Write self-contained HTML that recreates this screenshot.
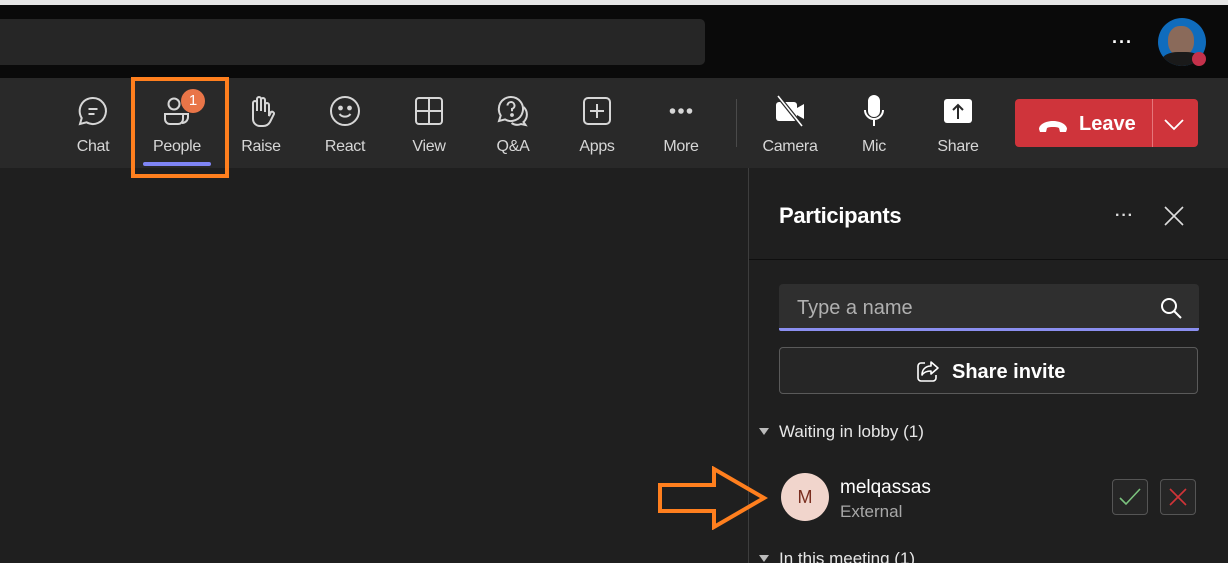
<!DOCTYPE html>
<html><head><meta charset="utf-8"><style>
*{margin:0;padding:0;box-sizing:border-box}
html,body{width:1228px;height:563px;overflow:hidden}
body{background:#1f1f1f;font-family:"Segoe UI","Liberation Sans",sans-serif;color:#fff;position:relative}
.abs{position:absolute}
.item{position:absolute;top:94px;width:84px;text-align:center}
.item svg{display:block;margin:0 auto;width:34px;height:34px}
.item .lbl{font-size:16px;color:#d6d6d6;margin-top:10px;letter-spacing:-0.3px}
</style></head><body>
<div class="abs" style="left:0;top:0;width:1228px;height:5px;background:#e6e6e6"></div>
<div class="abs" style="left:0;top:5px;width:1228px;height:73px;background:#0a0a0a"></div>
<div class="abs" style="left:0;top:19px;width:705px;height:46px;background:#262626;border-radius:0 5px 5px 0"></div>
<div class="abs" style="left:1112px;top:32px;font-size:18px;letter-spacing:1px;color:#fff;font-weight:bold">···</div>
<div class="abs" style="left:1158px;top:18px;width:48px;height:48px;border-radius:50%;background:#0f6cbd;overflow:hidden">
 <div class="abs" style="left:10px;top:8px;width:26px;height:30px;border-radius:45%;background:#8a6a5a"></div>
 <div class="abs" style="left:4px;top:34px;width:40px;height:20px;border-radius:40%;background:#1a1a1a"></div>
</div>
<div class="abs" style="left:1192px;top:52px;width:14px;height:14px;border-radius:50%;background:#c4314b"></div>

<div class="abs" style="left:0;top:78px;width:1228px;height:90px;background:#292929"></div>

<div class="item" style="left:51px"><svg viewBox="0 0 34 34" fill="none" stroke="#d6d6d6" stroke-width="2"><path d="M17 4a13 13 0 1 1-6.5 24.3L4 30l1.7-6A13 13 0 0 1 17 4z"/><path d="M12.5 15h9M12.5 20h6"/></svg><div class="lbl">Chat</div></div>
<div class="item" style="left:135px"><svg viewBox="0 0 34 34" fill="none" stroke="#d6d6d6" stroke-width="2"><circle cx="14" cy="10" r="5.5"/><path d="M5 20h18v5a5 5 0 0 1-5 5h-8a5 5 0 0 1-5-5z"/><path d="M23 20h5v3a6 6 0 0 1-6 6"/></svg><div class="lbl">People</div></div>
<div class="abs" style="left:181px;top:89px;width:24px;height:24px;border-radius:50%;background:#e97548;font-size:15px;text-align:center;line-height:24px;color:#fff">1</div>
<div class="abs" style="left:143px;top:162px;width:68px;height:4px;border-radius:2px;background:#7f85f5"></div>
<div class="abs" style="left:131px;top:77px;width:98px;height:101px;border:4px solid #ff7f1e"></div>

<div class="item" style="left:219px"><svg viewBox="0 0 34 34" fill="none" stroke="#d6d6d6" stroke-width="2"><path d="M9 19V9a2 2 0 0 1 4 0v8V5a2 2 0 0 1 4 0v12V6a2 2 0 0 1 4 0v12-7a2 2 0 0 1 4 0v11l2-4a2 2 0 0 1 3 2l-4 8a8 8 0 0 1-7 4h-3a7 7 0 0 1-7-7z"/></svg><div class="lbl">Raise</div></div>
<div class="item" style="left:303px"><svg viewBox="0 0 34 34" fill="none" stroke="#d6d6d6" stroke-width="2"><circle cx="17" cy="17" r="14"/><circle cx="12.5" cy="14" r="1.4" fill="#d6d6d6"/><circle cx="21.5" cy="14" r="1.4" fill="#d6d6d6"/><path d="M11.5 20a7 7 0 0 0 11 0"/></svg><div class="lbl">React</div></div>
<div class="item" style="left:387px"><svg viewBox="0 0 34 34" fill="none" stroke="#d6d6d6" stroke-width="2"><rect x="4" y="4" width="26" height="26" rx="3"/><path d="M17 4v26M4 17h26"/></svg><div class="lbl">View</div></div>
<div class="item" style="left:471px"><svg viewBox="0 0 34 34" fill="none" stroke="#d6d6d6" stroke-width="2"><path d="M15 3a12 12 0 1 1-6 22.4L3 27l1.7-5.5A12 12 0 0 1 15 3z"/><path d="M27.5 13a10 10 0 0 1 0 15l2 3-4.5-1a10 10 0 0 1-9.5-1"/><path d="M11.5 11.5a3.5 3.5 0 1 1 4.5 3.4v2.4"/><circle cx="16" cy="21" r=".9" fill="#d6d6d6"/></svg><div class="lbl">Q&amp;A</div></div>
<div class="item" style="left:555px"><svg viewBox="0 0 34 34" fill="none" stroke="#d6d6d6" stroke-width="2"><rect x="4" y="4" width="26" height="26" rx="4"/><path d="M17 10v14M10 17h14"/></svg><div class="lbl">Apps</div></div>
<div class="item" style="left:639px"><svg viewBox="0 0 34 34" fill="#d6d6d6"><circle cx="8.5" cy="17" r="2.8"/><circle cx="17" cy="17" r="2.8"/><circle cx="25.5" cy="17" r="2.8"/></svg><div class="lbl">More</div></div>
<div class="abs" style="left:736px;top:99px;width:1px;height:48px;background:#4a4a4a"></div>
<div class="item" style="left:748px"><svg viewBox="0 0 34 34"><rect x="3" y="8" width="21" height="19" rx="3" fill="#fff"/><path d="M24 14l7-4v15l-7-4z" fill="#fff"/><path d="M5 2l24 30" stroke="#292929" stroke-width="4"/><path d="M5 2l24 30" stroke="#fff" stroke-width="1.6"/></svg><div class="lbl">Camera</div></div>
<div class="item" style="left:832px"><svg viewBox="0 0 34 34" fill="none" stroke="#fff" stroke-width="2"><rect x="12" y="2" width="10" height="20" rx="5" fill="#fff"/><path d="M8 16a9 9 0 0 0 18 0M17 25v7"/></svg><div class="lbl">Mic</div></div>
<div class="item" style="left:916px"><svg viewBox="0 0 34 34"><rect x="3" y="5" width="28" height="24" rx="3" fill="#fff"/><path d="M17 25V11M12 16l5-5 5 5" stroke="#292929" stroke-width="2" fill="none"/></svg><div class="lbl">Share</div></div>

<div class="abs" style="left:1015px;top:99px;width:183px;height:48px;background:#cf343b;border-radius:4px"></div>
<div class="abs" style="left:1152px;top:99px;width:1px;height:48px;background:#e5767b"></div>
<svg class="abs" style="left:1037px;top:116px" width="32" height="20" viewBox="0 0 32 20"><path d="M2 13c0-4 6-8 14-8s14 4 14 8l-1 3h-6l-1-4c-2-1-4-1-6-1s-4 0-6 1l-1 4H3z" fill="#fff"/></svg>
<div class="abs" style="left:1079px;top:113px;font-size:20px;font-weight:bold;color:#fff">Leave</div>
<svg class="abs" style="left:1163px;top:116px" width="22" height="16" viewBox="0 0 22 16"><path d="M2 4l9 9 9-9" stroke="#fff" stroke-width="1.8" fill="none"/></svg>

<div class="abs" style="left:748px;top:168px;width:1px;height:395px;background:#3d3d3d"></div>
<div class="abs" style="left:779px;top:203px;font-size:22px;font-weight:bold;color:#fff;letter-spacing:-0.3px">Participants</div>
<div class="abs" style="left:1115px;top:207px;font-size:16px;font-weight:bold;letter-spacing:1px;color:#ddd">···</div>
<svg class="abs" style="left:1163px;top:205px" width="22" height="22" viewBox="0 0 22 22"><path d="M2 2l18 18M20 2L2 20" stroke="#ddd" stroke-width="1.6"/></svg>
<div class="abs" style="left:749px;top:259px;width:479px;height:1px;background:#0f0f0f"></div>

<div class="abs" style="left:779px;top:284px;width:420px;height:47px;background:#2f2f2f;border-radius:4px 4px 2px 2px;border-bottom:3px solid #8b8ff0"></div>
<div class="abs" style="left:797px;top:297px;font-size:20px;color:#b0b0b0">Type a name</div>
<svg class="abs" style="left:1159px;top:296px" width="26" height="26" viewBox="0 0 26 26"><circle cx="10" cy="10" r="7" stroke="#fff" stroke-width="2" fill="none"/><path d="M15 15l7 7" stroke="#fff" stroke-width="2"/></svg>

<div class="abs" style="left:779px;top:347px;width:419px;height:47px;border:1px solid #5a5a5a;border-radius:4px;background:#262626"></div>
<svg class="abs" style="left:916px;top:359px" width="26" height="24" viewBox="0 0 26 24"><path d="M9 4H5a3 3 0 0 0-3 3v12a3 3 0 0 0 3 3h12a3 3 0 0 0 3-3v-3" stroke="#fff" stroke-width="1.6" fill="none"/><path d="M15 3l7 6-7 6v-3c-4 0-7 1-9 4 0-5 3-9 9-9z" stroke="#fff" stroke-width="1.6" fill="none" stroke-linejoin="round"/></svg>
<div class="abs" style="left:952px;top:361px;font-size:20px;font-weight:bold;color:#fff">Share invite</div>

<svg class="abs" style="left:757px;top:426px" width="14" height="12" viewBox="0 0 14 12"><path d="M2 2h10l-5 7z" fill="#bbb"/></svg>
<div class="abs" style="left:779px;top:422px;font-size:17px;color:#e6e6e6">Waiting in lobby (1)</div>

<div class="abs" style="left:781px;top:473px;width:48px;height:48px;border-radius:50%;background:#f1d5cc;color:#7a2e1f;font-size:18px;text-align:center;line-height:48px">M</div>
<div class="abs" style="left:840px;top:477px;font-size:19px;color:#fff">melqassas</div>
<div class="abs" style="left:840px;top:502px;font-size:17px;color:#a8a8a8">External</div>
<div class="abs" style="left:1112px;top:479px;width:36px;height:36px;border:1px solid #555;border-radius:4px;background:#262626"></div>
<svg class="abs" style="left:1118px;top:485px" width="24" height="24" viewBox="0 0 24 24"><path d="M2 13l6 6L22 4" stroke="#7bc27e" stroke-width="1.6" fill="none"/></svg>
<div class="abs" style="left:1160px;top:479px;width:36px;height:36px;border:1px solid #555;border-radius:4px;background:#262626"></div>
<svg class="abs" style="left:1168px;top:487px" width="20" height="20" viewBox="0 0 20 20"><path d="M2 2l16 16M18 2L2 18" stroke="#d13438" stroke-width="1.6"/></svg>

<svg class="abs" style="left:757px;top:553px" width="14" height="12" viewBox="0 0 14 12"><path d="M2 2h10l-5 7z" fill="#bbb"/></svg>
<div class="abs" style="left:779px;top:549px;font-size:17px;color:#e6e6e6">In this meeting (1)</div>

<svg class="abs" style="left:656px;top:466px" width="112" height="64" viewBox="0 0 112 64"><path d="M4 19h54V3l50 29-50 29V45H4z" fill="none" stroke="#ff7f1e" stroke-width="4" stroke-linejoin="miter"/></svg>
</body></html>
